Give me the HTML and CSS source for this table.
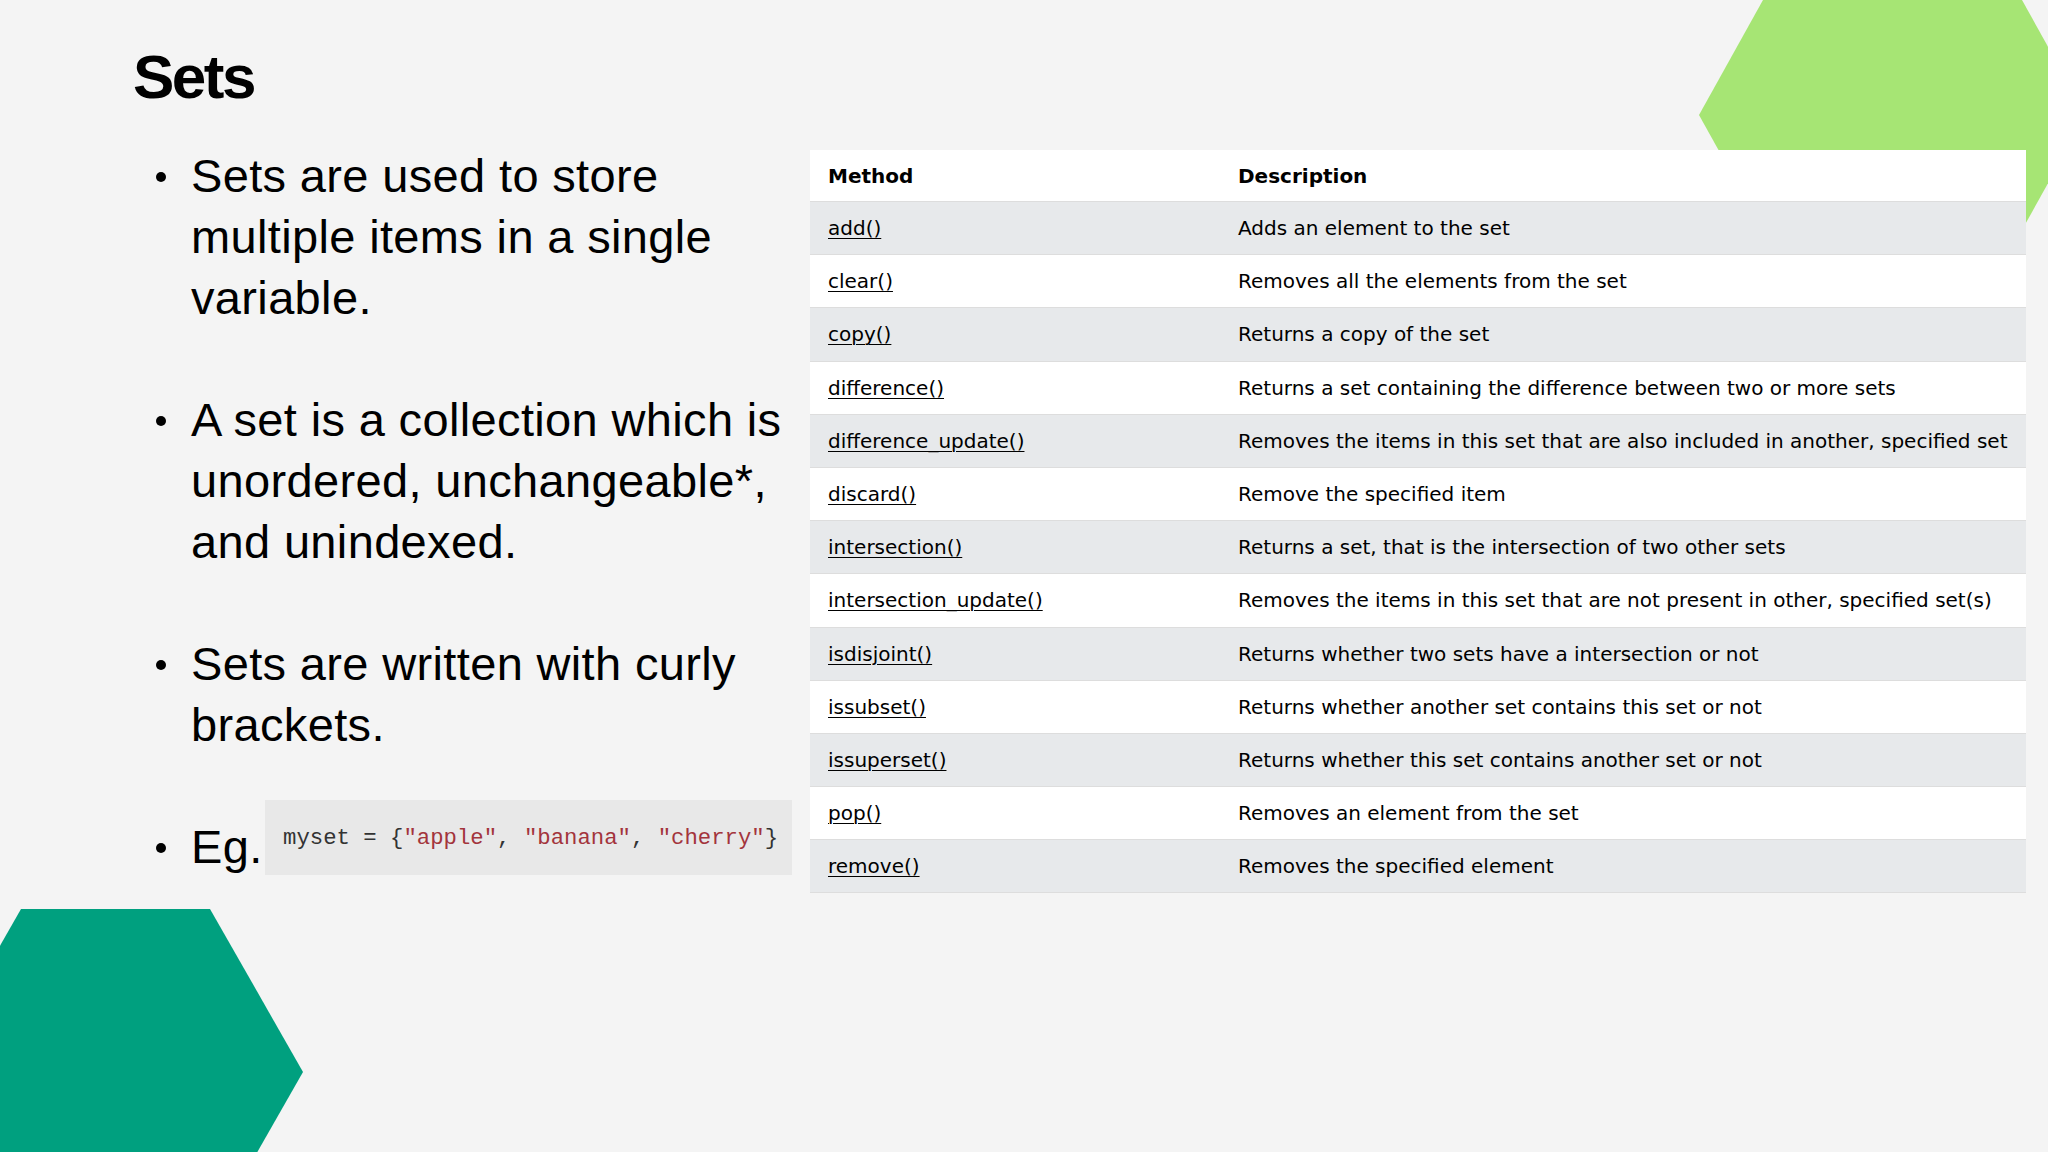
FILE: index.html
```html
<!DOCTYPE html>
<html lang="en">
<head>
<meta charset="utf-8">
<title>Sets</title>
<link rel="stylesheet" href="styles.css">
</head>
<body>
<svg class="deco" width="2048" height="1152" viewBox="0 0 2048 1152" aria-hidden="true">
  <polygon class="hex-green" points="1763,0 2022,0 2086,115 2022,230 1763,230 1699,115"/>
  <polygon class="hex-teal" points="21,909 210,909 303,1072 210,1235 21,1235 -72,1072"/>
</svg>
<main class="slide">
  <section class="left">
    <h1 class="title">Sets</h1>
    <ul class="points">
      <li class="point"><span class="dot"></span><span class="text">Sets are used to store multiple items in a single variable.</span></li>
      <li class="point"><span class="dot"></span><span class="text">A set is a collection which is unordered, unchangeable*, and unindexed.</span></li>
      <li class="point"><span class="dot"></span><span class="text">Sets are written with curly brackets.</span></li>
      <li class="point eg"><span class="dot"></span><span class="eg-label">Eg.</span><code class="code">myset = {<span class="str">"apple"</span>, <span class="str">"banana"</span>, <span class="str">"cherry"</span>}</code></li>
    </ul>
  </section>
  <section class="right">
    <table class="methods">
      <thead>
        <tr><th class="c1">Method</th><th>Description</th></tr>
      </thead>
      <tbody>
        <tr><td><a href="#">add()</a></td><td>Adds an element to the set</td></tr>
        <tr><td><a href="#">clear()</a></td><td>Removes all the elements from the set</td></tr>
        <tr><td><a href="#">copy()</a></td><td>Returns a copy of the set</td></tr>
        <tr><td><a href="#">difference()</a></td><td>Returns a set containing the difference between two or more sets</td></tr>
        <tr><td><a href="#">difference_update()</a></td><td>Removes the items in this set that are also included in another, specified set</td></tr>
        <tr><td><a href="#">discard()</a></td><td>Remove the specified item</td></tr>
        <tr><td><a href="#">intersection()</a></td><td>Returns a set, that is the intersection of two other sets</td></tr>
        <tr><td><a href="#">intersection_update()</a></td><td>Removes the items in this set that are not present in other, specified set(s)</td></tr>
        <tr><td><a href="#">isdisjoint()</a></td><td>Returns whether two sets have a intersection or not</td></tr>
        <tr><td><a href="#">issubset()</a></td><td>Returns whether another set contains this set or not</td></tr>
        <tr><td><a href="#">issuperset()</a></td><td>Returns whether this set contains another set or not</td></tr>
        <tr><td><a href="#">pop()</a></td><td>Removes an element from the set</td></tr>
        <tr><td><a href="#">remove()</a></td><td>Removes the specified element</td></tr>
      </tbody>
    </table>
  </section>
</main>
</body>
</html>
```
FILE: styles.css
```css
html, body {
  margin: 0;
  padding: 0;
}
body {
  width: 2048px;
  height: 1152px;
  overflow: hidden;
  position: relative;
  background: #f4f4f4;
  font-family: "Liberation Sans", Arial, sans-serif;
  color: #000;
}
.deco {
  position: absolute;
  left: 0;
  top: 0;
  z-index: 0;
}
.hex-green { fill: #a6e574; }
.hex-teal { fill: #00a07f; }

.slide {
  position: relative;
  z-index: 1;
  display: flex;
  align-items: flex-start;
  padding-left: 131px;
}
.left {
  width: 679px;
  flex: none;
}
.title {
  margin: 40px 0 0 0;
  padding-left: 2px;
  font-size: 62px;
  line-height: 74px;
  font-weight: 700;
  letter-spacing: -2.5px;
}
.points {
  list-style: none;
  margin: 31px 0 0 0;
  padding: 0;
  display: flex;
  flex-direction: column;
  gap: 61px;
}
.point {
  display: flex;
  align-items: flex-start;
  font-size: 47px;
  line-height: 61px;
  letter-spacing: 0.35px;
}
.dot {
  flex: none;
  width: 10px;
  height: 10px;
  border-radius: 50%;
  background: #000;
  margin: 27px 25px 0 25px;
}
.text {
  max-width: 610px;
}
.eg-label {
  flex: none;
  width: 74px;
}
.code {
  flex: none;
  box-sizing: border-box;
  width: 527px;
  height: 75px;
  margin-top: -16px;
  padding-left: 18px;
  display: flex;
  align-items: center;
  background: #e8e8e8;
  font-family: "Liberation Mono", "DejaVu Sans Mono", monospace;
  font-size: 22.3px;
  line-height: 30px;
  letter-spacing: 0;
  color: #333;
  white-space: pre;
}
.str { color: #a3343c; }

.right {
  flex: none;
  margin-top: 150px;
}
.methods {
  width: 1216px;
  border-collapse: collapse;
  font-family: "DejaVu Sans", Verdana, sans-serif;
  font-size: 20px;
  color: #000;
}
.methods th {
  height: 51px;
  padding: 0 18px;
  text-align: left;
  font-weight: 700;
  background: #fff;
  border-bottom: 1px solid #dddddd;
}
.methods th.c1 { width: 374px; }
.methods td {
  height: 52.2px;
  padding: 0 18px;
  background: #fff;
  border-bottom: 1px solid #dddddd;
  white-space: nowrap;
}
.methods tbody tr:nth-child(odd) td { background: #e7e9eb; }
.methods a {
  color: #000;
  text-decoration: underline;
  text-decoration-thickness: 1px;
  text-underline-offset: 3px;
}
```
